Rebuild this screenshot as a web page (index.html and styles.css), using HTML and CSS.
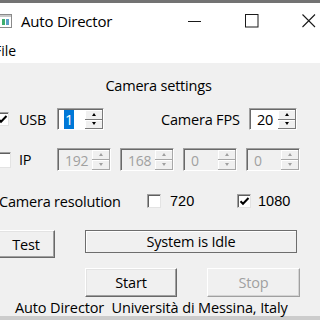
FILE: index.html
```html
<!DOCTYPE html>
<html>
<head>
<meta charset="utf-8">
<link rel="stylesheet" href="styles.css">
</head>
<body>
<div class="window">
  <div class="frame-top"></div>
  <div class="titlebar">
    <span class="app-icon">
      <svg width="16" height="16" viewBox="0 0 16 16"><rect x="0.5" y="1.5" width="15" height="13" fill="#fff" stroke="#8a8a8a"/><rect x="1" y="2" width="14" height="2" fill="#c9c9c9"/><rect x="6" y="6" width="3" height="6" fill="#3fae6e"/><rect x="10" y="6" width="3" height="6" fill="#5aa0c8"/></svg>
    </span>
    <span class="title">Auto Director</span>
    <span class="controls">
      <span class="ctl"><svg width="14" height="14" viewBox="0 0 14 14"><path d="M0 7.5H13" stroke="#1a1a1a" stroke-width="1"/></svg></span>
      <span class="ctl"><svg width="14" height="14" viewBox="0 0 14 14"><rect x="0.5" y="0.5" width="12.5" height="12.5" fill="none" stroke="#1a1a1a"/></svg></span>
      <span class="ctl"><svg width="14" height="14" viewBox="0 0 14 14"><path d="M0.5 0.5L13 13M13 0.5L0.5 13" stroke="#1a1a1a" stroke-width="1.1"/></svg></span>
    </span>
  </div>
  <div class="menubar"><span class="menu">File</span></div>
  <div class="client">
    <div class="heading">Camera settings</div>

    <div class="row r1">
      <span class="chk c-usb"><svg width="11" height="11" viewBox="0 0 11 11"><path d="M1.5 5.2L4 7.8L9.5 2" fill="none" stroke="#000" stroke-width="2"/></svg></span>
      <span class="lbl src-lbl">USB</span>
      <span class="spin s-usb">
        <span class="val"><span class="sel">1</span></span>
        <span class="arrows"><span class="up"></span><span class="dn"></span></span>
      </span>
      <span class="lbl fps-lbl">Camera FPS</span>
      <span class="spin s-fps">
        <span class="val">20</span>
        <span class="arrows"><span class="up"></span><span class="dn"></span></span>
      </span>
    </div>

    <div class="row r2">
      <span class="chk c-ip"></span>
      <span class="lbl src-lbl ip-lbl">IP</span>
      <span class="spin ipbox off">
        <span class="val">192</span>
        <span class="arrows"><span class="up"></span><span class="dn"></span></span>
      </span>
      <span class="spin ipbox off">
        <span class="val">168</span>
        <span class="arrows"><span class="up"></span><span class="dn"></span></span>
      </span>
      <span class="spin ipbox off">
        <span class="val">0</span>
        <span class="arrows"><span class="up"></span><span class="dn"></span></span>
      </span>
      <span class="spin ipbox off">
        <span class="val">0</span>
        <span class="arrows"><span class="up"></span><span class="dn"></span></span>
      </span>
    </div>

    <div class="row r3">
      <span class="lbl res-lbl">Camera resolution</span>
      <span class="chk"></span>
      <span class="num n720">720</span>
      <span class="chk"><svg width="11" height="11" viewBox="0 0 11 11"><path d="M1.5 5.2L4 7.8L9.5 2" fill="none" stroke="#000" stroke-width="2"/></svg></span>
      <span class="num n1080">1080</span>
    </div>

    <div class="row r4">
      <span class="btn b-test">Test</span>
      <span class="status">System is Idle</span>
    </div>

    <div class="row r5">
      <span class="btn b-start">Start</span>
      <span class="btn b-stop disabled">Stop</span>
    </div>

    <div class="footer">Auto Director&nbsp; Università di Messina, Italy</div>
  </div>
  <div class="frame-bottom"></div>
</div>
</body>
</html>
```
FILE: styles.css
```css
html, body {
  margin: 0;
  padding: 0;
}
body {
  width: 320px;
  height: 320px;
  overflow: hidden;
  background: #f0f0f0;
  font-family: "Open Sans", "Noto Sans", sans-serif;
  color: #000;
}
.window {
  width: 337px;
}
.frame-top {
  height: 3px;
  background: #737373;
}
.titlebar {
  height: 35px;
  background: #fff;
  display: flex;
  align-items: center;
}
.app-icon {
  margin-left: -4px;
  width: 16px;
  height: 16px;
  margin-right: 9px;
  display: flex;
}
.title {
  font-size: 15px;
  letter-spacing: -0.2px;
  line-height: 20px;
}
.controls {
  margin-left: auto;
  display: flex;
}
.ctl {
  width: 57px;
  height: 35px;
  display: flex;
  align-items: center;
  justify-content: center;
}
.menubar {
  height: 25px;
  background: #fff;
  display: flex;
  align-items: center;
}
.menu {
  margin-left: -6px;
  font-size: 14px;
  line-height: 18px;
}
.client {
  background: #f0f0f0;
}
.heading {
  width: 317px;
  text-align: center;
  padding-top: 14px;
  line-height: 18px;
  font-size: 14.5px;
  letter-spacing: -0.2px;
}
.row {
  display: flex;
  align-items: center;
}
.lbl {
  font-size: 14.5px;
  letter-spacing: -0.2px;
  white-space: nowrap;
  flex: none;
}
.r1 {
  height: 22px;
  margin-top: 13px;
}
.r2 {
  height: 23px;
  margin-top: 18px;
}
.r3 {
  height: 30px;
  margin-top: 15px;
}
.r4 {
  height: 28px;
  margin-top: 14px;
  align-items: flex-start;
}
.r5 {
  height: 29px;
  margin-top: 10px;
}

/* checkboxes */
.chk {
  flex: none;
  width: 14px;
  height: 14px;
  box-sizing: border-box;
  border: 1px solid;
  border-color: #a0a0a0 #e3e3e3 #e3e3e3 #a0a0a0;
  box-shadow: inset 1px 1px 0 #5f5f5f;
  background: #fff;
  display: flex;
  align-items: center;
  justify-content: center;
  padding: 1px 0 0 1px;
}
.c-usb {
  margin-left: -5px;
}
.c-ip {
  margin-left: -4px;
  width: 15px;
  height: 16px;
}
.src-lbl {
  margin-left: 10px;
  width: 38px;
}
.ip-lbl {
  margin-left: 8px;
}

/* spin boxes */
.spin {
  flex: none;
  display: flex;
  box-sizing: border-box;
  height: 22px;
  border: 1px solid;
  border-color: #a0a0a0 #ffffff #ffffff #a0a0a0;
  box-shadow: inset 1px 1px 0 #696969;
  background: #fff;
  padding: 1px 0 0 1px;
}
.s-usb {
  width: 47px;
}
.s-fps {
  width: 48px;
  margin-left: 8px;
}
.fps-lbl {
  margin-left: 57px;
  width: 80px;
}
.ipbox {
  width: 54px;
  height: 23px;
  margin-right: 9px;
}
.val {
  flex: 1;
  display: flex;
  align-items: center;
  padding-left: 6px;
  font-size: 14.5px;
  letter-spacing: -0.2px;
  white-space: nowrap;
}
.s-usb .val {
  padding-left: 5px;
}
.sel {
  background: #0078d7;
  color: #fff;
  padding: 1px 1px;
  line-height: 17px;
}
.off {
  background: #f0f0f0;
}
.off .val {
  color: #a0a0a0;
  font-size: 14px;
}
.arrows {
  flex: none;
  width: 18px;
  display: flex;
  flex-direction: column;
}
.arrows span {
  flex: 1;
  background: #f0f0f0;
  border-right: 1px solid #7a7a7a;
  border-bottom: 1px solid #7a7a7a;
  box-shadow: inset 1px 1px 0 #fff;
  display: flex;
  align-items: center;
  justify-content: center;
}
.arrows .up::after,
.arrows .dn::after {
  content: "";
  width: 0;
  height: 0;
  border-left: 2.5px solid transparent;
  border-right: 2.5px solid transparent;
}
.arrows .up::after {
  border-bottom: 3px solid #000;
}
.arrows .dn::after {
  border-top: 3px solid #000;
}
.off .arrows span {
  border-color: #a8a8a8;
}
.off .arrows .up::after {
  border-bottom-color: #a0a0a0;
}
.off .arrows .dn::after {
  border-top-color: #a0a0a0;
}

/* resolution row */
.res-lbl {
  margin-left: -1px;
  width: 148px;
}
.num {
  font-family: "Liberation Sans", Arial, sans-serif;
  font-size: 14.5px;
  flex: none;
}
.n720 {
  margin-left: 9px;
  width: 67px;
}
.n1080 {
  margin-left: 7px;
}

/* buttons */
.btn {
  flex: none;
  box-sizing: border-box;
  display: flex;
  align-items: center;
  justify-content: center;
  font-size: 14.5px;
  letter-spacing: -0.2px;
  background: #f0f0f0;
  border: 1px solid;
  border-color: #ffffff #696969 #696969 #ffffff;
  box-shadow: inset -1px -1px 0 #a0a0a0, inset 1px 1px 0 #e3e3e3;
}
.b-test {
  margin-left: -3px;
  width: 58px;
  height: 28px;
}
.b-start {
  margin-left: 85px;
  width: 92px;
  height: 29px;
}
.b-stop {
  margin-left: 30px;
  width: 93px;
  height: 29px;
}
.disabled {
  color: #a0a0a0;
  border-color: #ffffff #a0a0a0 #a0a0a0 #ffffff;
  box-shadow: inset -1px -1px 0 #d4d4d4;
}
.status {
  flex: none;
  margin-left: 30px;
  width: 212px;
  height: 23px;
  box-sizing: border-box;
  border: 1px solid;
  border-color: #6d6d6d #6d6d6d #6d6d6d #6d6d6d;
  box-shadow: inset 1px 1px 0 #ffffff;
  display: flex;
  align-items: center;
  justify-content: center;
  font-size: 14.5px;
  letter-spacing: -0.2px;
}
.footer {
  margin-top: 3px;
  height: 16px;
  line-height: 16px;
  padding-left: 15px;
  font-size: 14.5px;
  letter-spacing: -0.12px;
  white-space: nowrap;
}
.frame-bottom {
  height: 4px;
  background: #cccccc;
}
```
